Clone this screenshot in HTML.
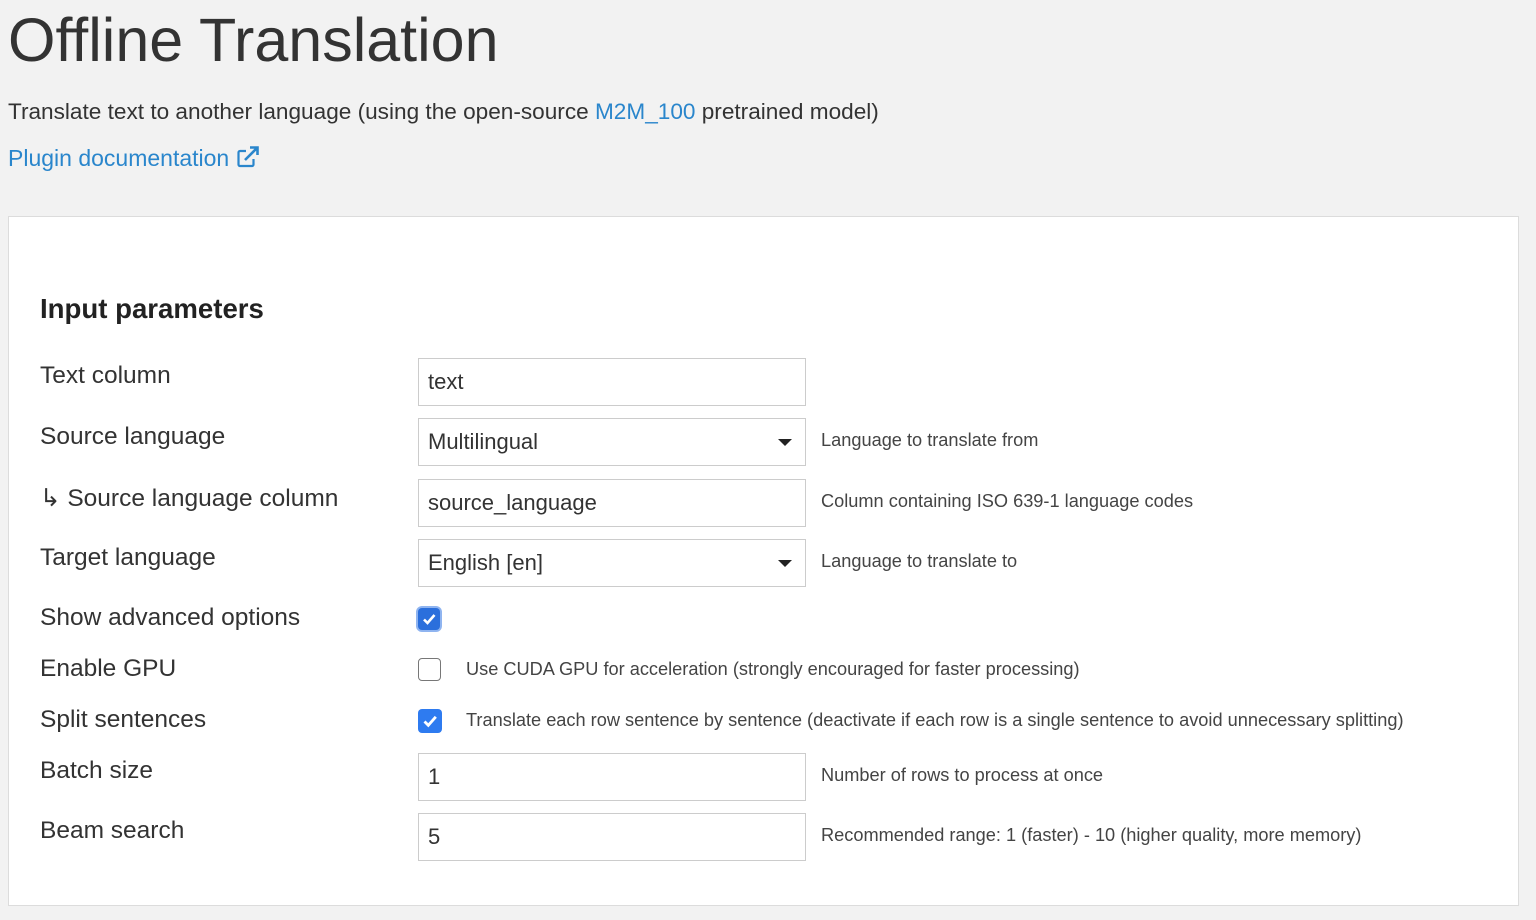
<!DOCTYPE html>
<html><head><style>
body{margin:0;width:1536px;height:920px;background:#f2f2f2;font-family:"Liberation Sans",sans-serif;color:#333;position:relative;overflow:hidden}
.a{position:absolute;white-space:nowrap}
h1{position:absolute;left:8px;top:2px;margin:0;font-weight:normal;font-size:61px;color:#333;line-height:76px}
.sub{left:8px;top:99px;font-size:22.6px;color:#333}
.blue{color:#2a86cc}
.card{position:absolute;left:8px;top:216px;width:1509px;height:688px;background:#fff;border:1px solid #dcdcdc}
.lbl{font-size:24.5px;color:#333;left:40px}
.inp{position:absolute;left:418px;width:386px;height:46px;border:1px solid #ccc;background:#fff;font-size:22px;line-height:46px;box-sizing:content-box}
.inp span{margin-left:9px}
.caret{position:absolute;right:13px;top:20px;width:0;height:0;border-left:7px solid transparent;border-right:7px solid transparent;border-top:7px solid #222}
.help{left:821px;font-size:18.2px;color:#444}
.cb{position:absolute;left:418px;width:22px;height:22px;border-radius:4px}
</style></head><body>
<h1>Offline Translation</h1>
<div class="a sub">Translate text to another language (using the open-source <span class="blue">M2M_100</span> pretrained model)</div>
<div class="a blue" style="left:8px;top:145px;font-size:23px">Plugin documentation <svg width="24" height="22" viewBox="0 0 24 22" style="vertical-align:-2px"><path d="M10 5H4a1.5 1.5 0 0 0-1.5 1.5v12A1.5 1.5 0 0 0 4 20h12a1.5 1.5 0 0 0 1.5-1.5V13" fill="none" stroke="#2a86cc" stroke-width="2.2"/><path d="M9 14L21 2M14 1.5h7.5V9" fill="none" stroke="#2a86cc" stroke-width="2.6"/></svg></div>
<div class="card"></div>
<div class="a" style="left:40px;top:293px;font-size:27.6px;font-weight:bold;color:#222">Input parameters</div>

<div class="a lbl" style="top:362px">Text column</div>
<div class="inp" style="top:358px"><span>text</span></div>

<div class="a lbl" style="top:423px">Source language</div>
<div class="inp" style="top:418px"><span>Multilingual</span><div class="caret"></div></div>
<div class="a help" style="top:430px">Language to translate from</div>

<div class="a lbl" style="top:483px">↳ Source language column</div>
<div class="inp" style="top:479px"><span>source_language</span></div>
<div class="a help" style="top:491px">Column containing ISO 639-1 language codes</div>

<div class="a lbl" style="top:544px">Target language</div>
<div class="inp" style="top:539px"><span>English [en]</span><div class="caret"></div></div>
<div class="a help" style="top:551px">Language to translate to</div>

<div class="a lbl" style="top:604px">Show advanced options</div>
<div class="cb" style="top:608px;background:#2b6fdc;box-shadow:0 0 0 2px #8fb4f0"><svg width="22" height="22" viewBox="0 0 22 22"><path d="M6 11.5l3.5 3.5 7-8" fill="none" stroke="#fff" stroke-width="2.6"/></svg></div>

<div class="a lbl" style="top:655px">Enable GPU</div>
<div class="cb" style="top:658px;border:1.5px solid #777;width:21px;height:21px;background:#fff"></div>
<div class="a help" style="left:466px;top:659px">Use CUDA GPU for acceleration (strongly encouraged for faster processing)</div>

<div class="a lbl" style="top:706px">Split sentences</div>
<div class="cb" style="top:709px;background:#2e7bf0;width:24px;height:24px"><svg width="24" height="24" viewBox="0 0 24 24"><path d="M6.5 12.5l3.8 3.8 7.5-8.5" fill="none" stroke="#fff" stroke-width="2.8"/></svg></div>
<div class="a help" style="left:466px;top:710px">Translate each row sentence by sentence (deactivate if each row is a single sentence to avoid unnecessary splitting)</div>

<div class="a lbl" style="top:757px">Batch size</div>
<div class="inp" style="top:753px"><span>1</span></div>
<div class="a help" style="top:765px">Number of rows to process at once</div>

<div class="a lbl" style="top:817px">Beam search</div>
<div class="inp" style="top:813px"><span>5</span></div>
<div class="a help" style="top:825px">Recommended range: 1 (faster) - 10 (higher quality, more memory)</div>
</body></html>
